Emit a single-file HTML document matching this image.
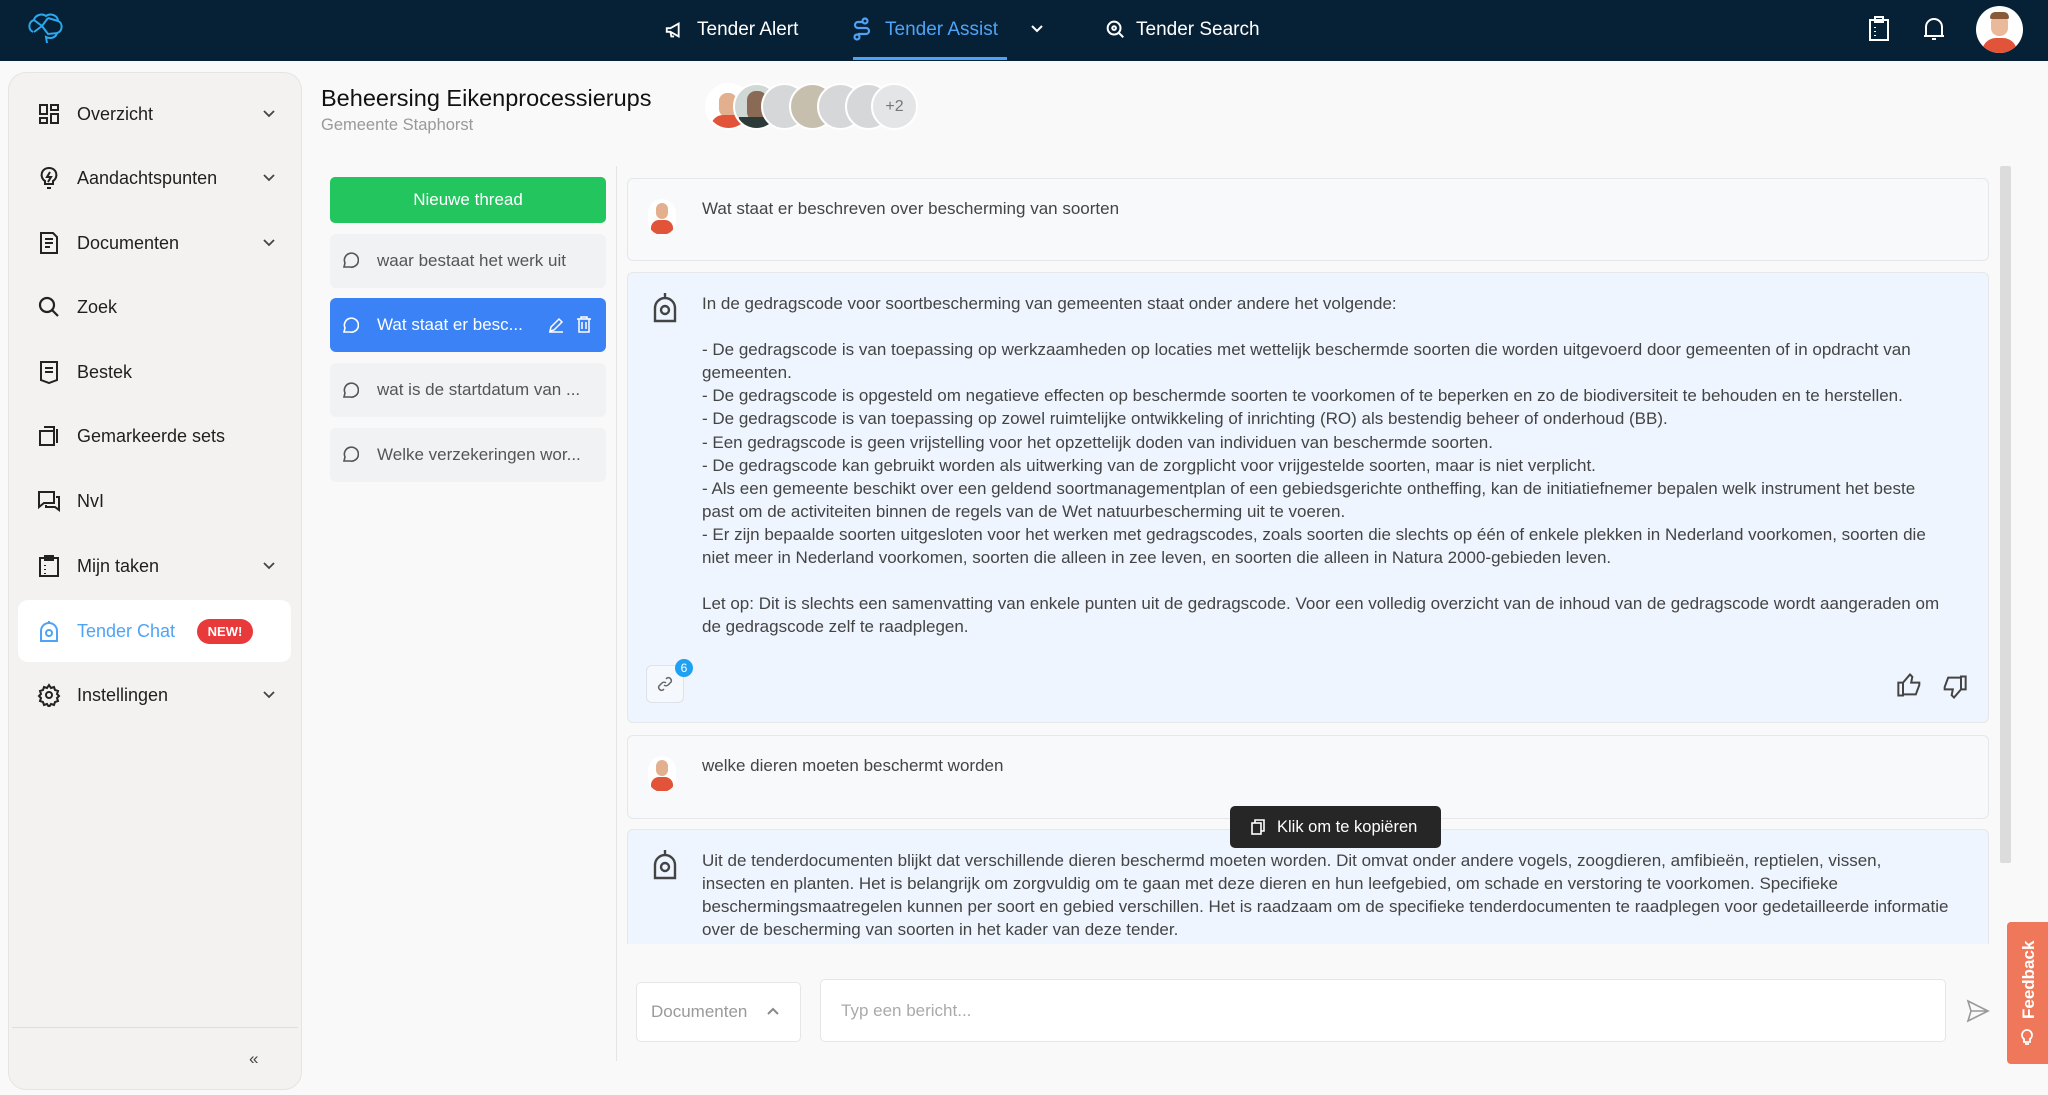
<!DOCTYPE html>
<html><head><meta charset="utf-8"><style>
*{box-sizing:border-box;margin:0;padding:0}
body{width:2048px;height:1095px;overflow:hidden;background:#f9f9f9;font-family:"Liberation Sans",sans-serif;position:relative;color:#222}
.a{position:absolute}
.hdr{left:0;top:0;width:2048px;height:61px;background:#062135}
.nav{color:#fff;font-size:19px;top:19px}
.sb{left:8px;top:72px;width:294px;height:1018px;background:#f3f2f1;border:1px solid #e6e4e2;border-radius:18px}
.mi{left:77px;font-size:18px;color:#1f1f1f}
.ic{left:37px;width:24px;height:24px}
.chev{left:262px;width:14px;height:14px}
.th{left:330px;width:276px;border-radius:6px;background:#f1f2f4;font-size:17px;color:#555}
.th span{position:absolute;left:47px;top:17px;white-space:nowrap}
.msg{left:627px;width:1362px;border:1px solid #e5e7eb;border-radius:6px}
.u{background:#f8f9fa}
.b{background:#eef5fe}
.t{position:absolute;left:74px;font-size:17px;line-height:23.1px;color:#444;white-space:nowrap}
</style></head><body>
<div class="a hdr"></div>
<svg class="a" style="left:25px;top:12px" width="40" height="34" viewBox="0 0 40 34" fill="none" stroke="#2aa8f0" stroke-width="2"><path d="M8 20c-5-2-5-10 1-12 1-5 8-7 12-4 4-3 12-1 12 5 5 2 5 10-1 12-1 5-7 6-11 4l1 6M9 8l8 6 6-8M17 14l-8 6M17 14l6 8 10-1M23 6l10 3"/></svg>
<svg class="a" style="left:664px;top:19px" width="22" height="22" viewBox="0 0 24 24" fill="none" stroke="#fff" stroke-width="2"><path d="M3 10v4h4l9 5V5L7 10z M7 14l1 5h3"/></svg>
<div class="a nav" style="left:697px">Tender Alert</div>
<svg class="a" style="left:852px;top:17px" width="20" height="24" viewBox="0 0 20 24" fill="none" stroke="#4fa3f7" stroke-width="2.2"><circle cx="13" cy="4" r="2.5"/><path d="M10.5 5H6a3 3 0 000 6h8a3 3 0 010 6H6"/><circle cx="5" cy="20" r="2.5"/></svg>
<div class="a nav" style="left:885px;color:#4fa3f7">Tender Assist</div>
<svg class="a" style="left:1030px;top:22px" width="14" height="14" viewBox="0 0 14 14" fill="none" stroke="#fff" stroke-width="2"><path d="M2 4l5 5 5-5"/></svg>
<div class="a" style="left:853px;top:57px;width:154px;height:3px;background:#4fa3f7"></div>
<svg class="a" style="left:1104px;top:18px" width="22" height="22" viewBox="0 0 24 24" fill="none" stroke="#fff" stroke-width="2.2"><circle cx="11" cy="11" r="7"/><circle cx="11" cy="11" r="2"/><path d="M16 16l5 5"/></svg>
<div class="a nav" style="left:1136px">Tender Search</div>
<svg class="a" style="left:1868px;top:16px" width="22" height="26" viewBox="0 0 22 26" fill="none" stroke="#fff" stroke-width="2"><rect x="2" y="4" width="18" height="20"/><rect x="7" y="1" width="8" height="5"/><path d="M7 11v1M7 15v1M7 19v1"/></svg>
<svg class="a" style="left:1922px;top:15px" width="24" height="28" viewBox="0 0 24 28" fill="none" stroke="#fff" stroke-width="2"><path d="M4 21V12a8 8 0 0116 0v9zM2 21h20M10 24h4"/></svg>
<div class="a" style="left:1976px;top:6px;width:47px;height:47px;border-radius:50%;background:#fff;overflow:hidden"><div class="a" style="left:15px;top:8px;width:17px;height:22px;border-radius:8px;background:#e9b99a"></div><div class="a" style="left:14px;top:6px;width:19px;height:7px;border-radius:6px 6px 2px 2px;background:#8a5a38"></div><div class="a" style="left:6px;top:32px;width:35px;height:20px;border-radius:14px 14px 0 0;background:#e2543a"></div></div>

<div class="a sb"></div>
<div class="a" style="left:18px;top:600px;width:273px;height:62px;background:#fff;border-radius:10px"></div>
<svg class="a ic" style="top:102px" viewBox="0 0 24 24" fill="none" stroke="#222" stroke-width="2"><rect x="3" y="3" width="7" height="9"/><rect x="14" y="3" width="7" height="5"/><rect x="14" y="12" width="7" height="9"/><rect x="3" y="16" width="7" height="5"/></svg>
<div class="a mi" style="top:104px">Overzicht</div>
<svg class="a ic" style="top:166px" viewBox="0 0 24 24" fill="none" stroke="#222" stroke-width="2"><path d="M9 18h6M10 22h4M12 2a7 7 0 00-4 13v3h8v-3a7 7 0 00-4-13zM13 6l-3 5h4l-3 5"/></svg>
<div class="a mi" style="top:168px">Aandachtspunten</div>
<svg class="a ic" style="top:231px" viewBox="0 0 24 24" fill="none" stroke="#222" stroke-width="2"><path d="M4 2h12l4 4v16H4zM8 8h8M8 12h8M8 16h5"/></svg>
<div class="a mi" style="top:233px">Documenten</div>
<svg class="a ic" style="top:295px" viewBox="0 0 24 24" fill="none" stroke="#222" stroke-width="2.2"><circle cx="10" cy="10" r="7"/><path d="M15 15l6 6"/></svg>
<div class="a mi" style="top:297px">Zoek</div>
<svg class="a ic" style="top:360px" viewBox="0 0 24 24" fill="none" stroke="#222" stroke-width="2"><path d="M4 2h16v18l-8 3-8-3zM8 8h8M8 12h8"/></svg>
<div class="a mi" style="top:362px">Bestek</div>
<svg class="a ic" style="top:424px" viewBox="0 0 24 24" fill="none" stroke="#222" stroke-width="2"><path d="M7 3h10v4M3 7h14v14H3zM20 5v14"/></svg>
<div class="a mi" style="top:426px">Gemarkeerde sets</div>
<svg class="a ic" style="top:489px" viewBox="0 0 24 24" fill="none" stroke="#222" stroke-width="2"><path d="M2 3h15v11H7l-5 4zM19 8h3v13l-4-3H9v-2"/></svg>
<div class="a mi" style="top:491px">NvI</div>
<svg class="a ic" style="top:554px" viewBox="0 0 24 24" fill="none" stroke="#222" stroke-width="2"><rect x="3" y="4" width="18" height="18"/><rect x="8" y="2" width="8" height="4"/><path d="M8 11v1M8 15v1M8 19v1"/></svg>
<div class="a mi" style="top:556px">Mijn taken</div>
<svg class="a ic" style="top:619px" viewBox="0 0 24 24" fill="none" stroke="#4fa3f7" stroke-width="2"><path d="M4 22V12a8 8 0 0116 0v10zM12 2v2"/><circle cx="12" cy="14" r="3"/></svg>
<div class="a mi" style="top:621px;color:#4fa3f7">Tender Chat</div>
<div class="a" style="left:197px;top:619px;width:56px;height:25px;background:#e83a3a;border-radius:13px;color:#fff;font-size:13px;font-weight:bold;text-align:center;line-height:25px">NEW!</div>
<svg class="a ic" style="top:683px" viewBox="0 0 24 24" fill="none" stroke="#222" stroke-width="2"><circle cx="12" cy="12" r="3"/><path d="M12 2l2 3 3-1 1 3 3 1-1 3 2 2-2 2 1 3-3 1-1 3-3-1-2 3-2-3-3 1-1-3-3-1 1-3-2-2 2-2-1-3 3-1 1-3 3 1z"/></svg>
<div class="a mi" style="top:685px">Instellingen</div>
<svg class="a chev" style="top:107px" viewBox="0 0 14 14" fill="none" stroke="#444" stroke-width="1.8"><path d="M2 4l5 5 5-5"/></svg>
<svg class="a chev" style="top:171px" viewBox="0 0 14 14" fill="none" stroke="#444" stroke-width="1.8"><path d="M2 4l5 5 5-5"/></svg>
<svg class="a chev" style="top:236px" viewBox="0 0 14 14" fill="none" stroke="#444" stroke-width="1.8"><path d="M2 4l5 5 5-5"/></svg>
<svg class="a chev" style="top:559px" viewBox="0 0 14 14" fill="none" stroke="#444" stroke-width="1.8"><path d="M2 4l5 5 5-5"/></svg>
<svg class="a chev" style="top:688px" viewBox="0 0 14 14" fill="none" stroke="#444" stroke-width="1.8"><path d="M2 4l5 5 5-5"/></svg>
<div class="a" style="left:12px;top:1027px;width:286px;height:1px;background:#e0deda"></div>
<div class="a" style="left:249px;top:1049px;font-size:17px;color:#444">«</div>

<div class="a" style="left:321px;top:85px;font-size:23.5px;color:#111">Beheersing Eikenprocessierups</div>
<div class="a" style="left:321px;top:116px;font-size:16.5px;color:#999">Gemeente Staphorst</div>
<div class="a" style="left:705px;top:83px;width:47px;height:47px;border-radius:50%;background:#fff;border:2px solid #fff;overflow:hidden"><div class="a" style="left:12px;top:8px;width:18px;height:24px;border-radius:8px;background:#e3b08f"></div><div class="a" style="left:4px;top:30px;width:36px;height:20px;border-radius:12px 12px 0 0;background:#e2543a"></div></div>
<div class="a" style="left:733px;top:83px;width:47px;height:47px;border-radius:50%;background:#cfd8d4;border:2px solid #fff;overflow:hidden"><div class="a" style="left:12px;top:6px;width:20px;height:30px;border-radius:9px;background:#8a6a55"></div><div class="a" style="left:4px;top:32px;width:36px;height:20px;background:#2d3a3a"></div></div>
<div class="a" style="left:761px;top:83px;width:47px;height:47px;border-radius:50%;background:#d6d7d9;border:2px solid #fff"></div>
<div class="a" style="left:789px;top:83px;width:47px;height:47px;border-radius:50%;background:#c7bfae;border:2px solid #fff"></div>
<div class="a" style="left:817px;top:83px;width:47px;height:47px;border-radius:50%;background:#d6d7d9;border:2px solid #fff"></div>
<div class="a" style="left:845px;top:83px;width:47px;height:47px;border-radius:50%;background:#d6d7d9;border:2px solid #fff"></div>
<div class="a" style="left:871px;top:83px;width:47px;height:47px;border-radius:50%;background:#e4e5e7;border:2px solid #fff;color:#777;font-size:16px;text-align:center;line-height:43px">+2</div>

<div class="a" style="left:330px;top:177px;width:276px;height:46px;background:#22c55e;border-radius:5px;color:#fff;font-size:17px;text-align:center;line-height:46px">Nieuwe thread</div>
<div class="a th" style="top:234px;height:54px"><span>waar bestaat het werk uit</span></div>
<div class="a th" style="top:298px;height:54px;background:#3b82f6;color:#fff"><span>Wat staat er besc...</span></div>
<div class="a th" style="top:363px;height:54px"><span>wat is de startdatum van ...</span></div>
<div class="a th" style="top:428px;height:54px"><span>Welke verzekeringen wor...</span></div>
<svg class="a" style="left:341px;top:251px" width="18" height="18" viewBox="0 0 18 18" fill="none" stroke="#555" stroke-width="1.6"><path d="M3 16l1-4A7 7 0 119 16z"/></svg>
<svg class="a" style="left:341px;top:316px" width="18" height="18" viewBox="0 0 18 18" fill="none" stroke="#fff" stroke-width="1.6"><path d="M3 16l1-4A7 7 0 119 16z"/></svg>
<svg class="a" style="left:341px;top:381px" width="18" height="18" viewBox="0 0 18 18" fill="none" stroke="#555" stroke-width="1.6"><path d="M3 16l1-4A7 7 0 119 16z"/></svg>
<svg class="a" style="left:341px;top:445px" width="18" height="18" viewBox="0 0 18 18" fill="none" stroke="#555" stroke-width="1.6"><path d="M3 16l1-4A7 7 0 119 16z"/></svg>
<svg class="a" style="left:548px;top:317px" width="16" height="16" viewBox="0 0 16 16" fill="none" stroke="#fff" stroke-width="1.5"><path d="M2 14l1-4 8-8 3 3-8 8zM1 15h14"/></svg>
<svg class="a" style="left:576px;top:316px" width="16" height="17" viewBox="0 0 16 17" fill="none" stroke="#fff" stroke-width="1.5"><path d="M1 3h14M5 3V1h6v2M3 3v13h10V3M6 6v7M10 6v7"/></svg>

<div class="a" style="left:616px;top:166px;width:1px;height:895px;background:#e5e5e5"></div>

<div class="a msg u" style="top:178px;height:83px">
<div class="a" style="left:20px;top:20px;width:28px;height:36px;border-radius:14px;background:#fff;overflow:hidden"><div class="a" style="left:8px;top:4px;width:12px;height:16px;border-radius:6px;background:#e3b08f"></div><div class="a" style="left:3px;top:21px;width:22px;height:14px;border-radius:8px 8px 0 0;background:#e2543a"></div></div>
<div class="t" style="top:18px">Wat staat er beschreven over bescherming van soorten</div></div>

<div class="a msg b" style="top:272px;height:451px">
<svg class="a" style="left:24px;top:18px" width="26" height="32" viewBox="0 0 26 32" fill="none" stroke="#444" stroke-width="2.4"><path d="M3 30V17a10 10 0 0120 0v13zM13 2v5"/><circle cx="13" cy="19" r="4"/></svg>
<div class="t" style="top:19px">In de gedragscode voor soortbescherming van gemeenten staat onder andere het volgende:<br><br>- De gedragscode is van toepassing op werkzaamheden op locaties met wettelijk beschermde soorten die worden uitgevoerd door gemeenten of in opdracht van<br>gemeenten.<br>- De gedragscode is opgesteld om negatieve effecten op beschermde soorten te voorkomen of te beperken en zo de biodiversiteit te behouden en te herstellen.<br>- De gedragscode is van toepassing op zowel ruimtelijke ontwikkeling of inrichting (RO) als bestendig beheer of onderhoud (BB).<br>- Een gedragscode is geen vrijstelling voor het opzettelijk doden van individuen van beschermde soorten.<br>- De gedragscode kan gebruikt worden als uitwerking van de zorgplicht voor vrijgestelde soorten, maar is niet verplicht.<br>- Als een gemeente beschikt over een geldend soortmanagementplan of een gebiedsgerichte ontheffing, kan de initiatiefnemer bepalen welk instrument het beste<br>past om de activiteiten binnen de regels van de Wet natuurbescherming uit te voeren.<br>- Er zijn bepaalde soorten uitgesloten voor het werken met gedragscodes, zoals soorten die slechts op één of enkele plekken in Nederland voorkomen, soorten die<br>niet meer in Nederland voorkomen, soorten die alleen in zee leven, en soorten die alleen in Natura 2000-gebieden leven.<br><br>Let op: Dit is slechts een samenvatting van enkele punten uit de gedragscode. Voor een volledig overzicht van de inhoud van de gedragscode wordt aangeraden om<br>de gedragscode zelf te raadplegen.</div>
<div class="a" style="left:18px;top:392px;width:38px;height:38px;border:1px solid #dde3ea;border-radius:6px;background:#f5f8fc"></div>
<svg class="a" style="left:29px;top:403px" width="16" height="16" viewBox="0 0 16 16" fill="none" stroke="#666" stroke-width="1.5"><path d="M7 9a3 3 0 004 0l3-3a3 3 0 00-4-4l-1 1M9 7a3 3 0 00-4 0L2 10a3 3 0 004 4l1-1"/></svg>
<div class="a" style="left:47px;top:386px;width:18px;height:18px;border-radius:50%;background:#1ea1f2;color:#fff;font-size:12px;text-align:center;line-height:18px">6</div>
<svg class="a" style="left:1268px;top:398px" width="28" height="28" viewBox="0 0 24 24" fill="none" stroke="#444" stroke-width="1.7"><path d="M2 10h4v11H2zM6 20h11l3-8v-2h-7l1-5-2-2-6 7"/></svg>
<svg class="a" style="left:1312px;top:400px" width="28" height="28" viewBox="0 0 24 24" fill="none" stroke="#444" stroke-width="1.7"><path d="M22 14h-4V3h4zM18 4H7l-3 8v2h7l-1 5 2 2 6-7"/></svg>
</div>

<div class="a msg u" style="top:735px;height:84px">
<div class="a" style="left:20px;top:20px;width:28px;height:36px;border-radius:14px;background:#fff;overflow:hidden"><div class="a" style="left:8px;top:4px;width:12px;height:16px;border-radius:6px;background:#e3b08f"></div><div class="a" style="left:3px;top:21px;width:22px;height:14px;border-radius:8px 8px 0 0;background:#e2543a"></div></div>
<div class="t" style="top:18px">welke dieren moeten beschermt worden</div></div>

<div class="a msg b" style="top:829px;height:115px;border-bottom:none;border-radius:6px 6px 0 0">
<svg class="a" style="left:24px;top:18px" width="26" height="32" viewBox="0 0 26 32" fill="none" stroke="#444" stroke-width="2.4"><path d="M3 30V17a10 10 0 0120 0v13zM13 2v5"/><circle cx="13" cy="19" r="4"/></svg>
<div class="t" style="top:19px">Uit de tenderdocumenten blijkt dat verschillende dieren beschermd moeten worden. Dit omvat onder andere vogels, zoogdieren, amfibieën, reptielen, vissen,<br>insecten en planten. Het is belangrijk om zorgvuldig om te gaan met deze dieren en hun leefgebied, om schade en verstoring te voorkomen. Specifieke<br>beschermingsmaatregelen kunnen per soort en gebied verschillen. Het is raadzaam om de specifieke tenderdocumenten te raadplegen voor gedetailleerde informatie<br>over de bescherming van soorten in het kader van deze tender.</div></div>

<div class="a" style="left:1230px;top:806px;width:211px;height:42px;background:#262626;border-radius:5px;color:#fff;font-size:16.5px;line-height:42px;padding-left:47px">Klik om te kopiëren</div>
<svg class="a" style="left:1251px;top:819px" width="14" height="16" viewBox="0 0 14 16" fill="none" stroke="#fff" stroke-width="1.6"><rect x="1" y="4" width="9" height="11"/><path d="M4 4V1h9v11h-3"/></svg>

<div class="a" style="left:2000px;top:166px;width:11px;height:697px;background:#dcdcdc;border-radius:2px"></div>

<div class="a" style="left:636px;top:982px;width:165px;height:60px;background:#fff;border:1px solid #e6e6e6;border-radius:5px;color:#9a9a9a;font-size:17px;line-height:58px;padding-left:14px">Documenten</div>
<svg class="a" style="left:766px;top:1005px" width="14" height="12" viewBox="0 0 14 12" fill="none" stroke="#888" stroke-width="2"><path d="M2 9l5-5 5 5"/></svg>
<div class="a" style="left:820px;top:979px;width:1126px;height:63px;background:#fff;border:1px solid #e6e6e6;border-radius:5px;color:#aaa;font-size:17px;line-height:61px;padding-left:20px">Typ een bericht...</div>
<svg class="a" style="left:1966px;top:999px" width="24" height="24" viewBox="0 0 24 24" fill="none" stroke="#999" stroke-width="1.6"><path d="M2 2l20 10L2 22l3-10zM5 12h17"/></svg>

<div class="a" style="left:2007px;top:922px;width:41px;height:142px;background:#f0785a;border-radius:4px 0 0 4px"></div>
<div class="a" style="left:2009px;top:920px;width:40px;height:120px;color:#fff;font-size:17px;font-weight:bold;writing-mode:vertical-rl;transform:rotate(180deg);text-align:center;line-height:40px">Feedback</div>
<svg class="a" style="left:2018px;top:1028px" width="18" height="18" viewBox="0 0 18 18" fill="none" stroke="#fff" stroke-width="1.8"><path d="M9 2a5 5 0 00-3 9v3h6v-3a5 5 0 00-3-9zM7 16h4"/></svg>
</body></html>
